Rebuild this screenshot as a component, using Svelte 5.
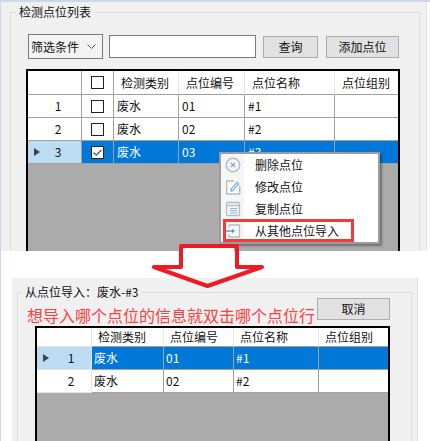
<script>
    const topCols = ['检测类别', '点位编号', '点位名称', '点位组别']
    const topRows = [
        { no: 1, code: '01', name: '#1', checked: false, active: false },
        { no: 2, code: '02', name: '#2', checked: false, active: false },
        { no: 3, code: '03', name: '#3', checked: true, active: true }
    ]
    const subRows = [
        { no: 1, code: '01', name: '#1', active: true },
        { no: 2, code: '02', name: '#2', active: false }
    ]
</script>

<div class="page">
    <section class="panel top">
        <div class="group">
            <span class="legend">检测点位列表</span>
            <div class="tools">
                <div class="select">
                    <span>筛选条件</span>
                    <svg width="9" height="5" viewBox="0 0 9 5"><path d="M.5.5 4.5 4.5 8.5.5" fill="none" stroke="#555" /></svg>
                </div>
                <div class="input"></div>
                <button class="btn query">查询</button>
                <button class="btn add">添加点位</button>
            </div>
            <div class="grid topgrid">
                <div class="row head">
                    <div class="cell rh"></div>
                    <div class="cell chk"><span class="box"></span></div>
                    {#each topCols as c}
                        <div class="cell">{c}</div>
                    {/each}
                </div>
                {#each topRows as r}
                    <div class="row" class:active={r.active}>
                        <div class="cell rh">
                            {#if r.active}<i class="tri"></i>{/if}
                            {r.no}
                        </div>
                        <div class="cell chk">
                            <span class="box">
                                {#if r.checked}
                                    <svg width="11" height="11" viewBox="0 0 11 11"><path d="M1.500 5.500 4.300 8 9.500 3" fill="none" stroke="#666" stroke-width="1.5" /></svg>
                                {/if}
                            </span>
                        </div>
                        <div class="cell">废水</div>
                        <div class="cell">{r.code}</div>
                        <div class="cell">{r.name}</div>
                        <div class="cell"></div>
                    </div>
                {/each}
                <div class="empty"></div>
            </div>
        </div>
    </section>

    <section class="panel sub">
        <div class="group">
            <span class="legend">从点位导入：废水-#3</span>
            <div class="hint">
                <span class="tip">想导入哪个点位的信息就双击哪个点位行</span>
                <button class="btn cancel">取消</button>
            </div>
            <div class="grid subgrid">
                <div class="row head">
                    <div class="cell rh"></div>
                    {#each topCols as c}
                        <div class="cell">{c}</div>
                    {/each}
                </div>
                {#each subRows as r}
                    <div class="row" class:active={r.active}>
                        <div class="cell rh">
                            {#if r.active}<i class="tri"></i>{/if}
                            {r.no}
                        </div>
                        <div class="cell">废水</div>
                        <div class="cell">{r.code}</div>
                        <div class="cell">{r.name}</div>
                        <div class="cell"></div>
                    </div>
                {/each}
                <div class="empty"></div>
            </div>
        </div>
    </section>

    <!-- overlays -->
    <div class="menu">
        <div class="item">
            <span class="ico">
                <svg width="18" height="18" viewBox="0 0 18 18">
                    <circle cx="9" cy="9" r="6.800" fill="#f4f6f9" stroke="#b4b9c2" stroke-width="1.4" />
                    <path d="M6.800 6.800 11.200 11.200M11.200 6.800 6.800 11.200" stroke="#7ea3cc" stroke-width="1.2" />
                </svg>
            </span>
            <span>删除点位</span>
        </div>
        <div class="item">
            <span class="ico">
                <svg width="18" height="18" viewBox="0 0 18 18">
                    <path d="M10 3H2.700V16H15.700V8" fill="#fff" stroke="#b8bbc0" stroke-width="1.4" />
                    <path d="M7 11 13 4 15 5.700 9 12.700 6.800 13.200Z" fill="#cfe4f6" stroke="#5fa5dc" />
                </svg>
            </span>
            <span>修改点位</span>
        </div>
        <div class="item">
            <span class="ico">
                <svg width="18" height="18" viewBox="0 0 18 18">
                    <rect x="2.500" y="2.500" width="13" height="13" rx="1" fill="#f3f5f8" stroke="#b8bbc0" stroke-width="1.3" />
                    <path d="M3 5.500H15" stroke="#b8bbc0" stroke-width="1.4" />
                    <path d="M6 8.500H13.500M6 10.700H13.500M6 12.900H13.500" stroke="#8db8e0" />
                </svg>
            </span>
            <span>复制点位</span>
        </div>
        <div class="item">
            <span class="ico">
                <svg width="18" height="18" viewBox="0 0 18 18">
                    <path d="M5 3H15.500V15H5V12.500M5 5.500V3" fill="#f6f7f9" stroke="#b8bbc0" stroke-width="1.3" />
                    <path d="M1 9H9" stroke="#4f9bd8" stroke-width="1.4" />
                    <path d="M8 6.800 11 9 8 11.200Z" fill="#4f9bd8" />
                </svg>
            </span>
            <span>从其他点位导入</span>
        </div>
        <div class="mark"></div>
    </div>

    <svg class="arrow" width="120" height="50" viewBox="0 0 120 50">
        <rect x="30" y="4" width="52" height="5" fill="#fff" />
        <path d="M29 2H85V23H110L55.500 42 2 23H29Z" fill="none" stroke="#ed1c24" stroke-width="4" stroke-linejoin="round" />
    </svg>
</div>

<style>
    :global(body) {
        background: #fff;
    }

    .page {
        position: relative;
        width: 429px;
        height: 439px;
        overflow: hidden;
        border-top: 2px solid #cbd8ea;
        border-left: 1px solid #cbd8ea;
        font-family: "Noto Sans CJK SC", "Liberation Sans", sans-serif;
        font-size: 12px;
        line-height: 18px;
        color: #111;
    }

    .panel {
        background: #f0f0f0;
        overflow: hidden;
        box-sizing: border-box;
    }

    .group {
        border: 1px solid #dcdcdc;
        height: 400px;
        box-sizing: border-box;
    }

    .legend {
        display: block;
        width: fit-content;
        background: #f0f0f0;
        padding: 0 3px;
        margin-top: -10px;
    }

    .top {
        width: 426px;
        height: 249px;
        padding: 10px 0 0 9px;
        border-right: 1px solid #e2e2e2;
    }

    .top .group {
        width: 410px;
    }

    .top .legend {
        margin-left: 5px;
    }

    .tools {
        display: flex;
        align-items: center;
        height: 25px;
        margin: 13px 0 10px 17px;
    }

    .select {
        width: 75px;
        height: 25px;
        box-sizing: border-box;
        border: 1px solid #7a7a7a;
        display: flex;
        align-items: center;
        justify-content: space-between;
        padding: 0 6px 0 2px;
        background: #f3f3f3;
    }

    .input {
        width: 147px;
        height: 23px;
        box-sizing: border-box;
        border: 1px solid #7a7a7a;
        background: #fff;
        margin: 0 7px 0 6px;
    }

    .btn {
        height: 22px;
        box-sizing: border-box;
        border: 1px solid #adadad;
        background: #e1e1e1;
        font: inherit;
        color: #111;
        padding: 0;
    }

    .query {
        width: 55px;
        margin-right: 8px;
    }

    .add {
        width: 73px;
    }

    .grid {
        border: 2px solid #000;
        border-bottom: 0;
        box-sizing: border-box;
        background: #ababab;
    }

    .row {
        display: grid;
        background: #fff;
    }

    .topgrid {
        width: 374px;
        margin-left: 15px;
    }

    .topgrid .row {
        grid-template-columns: 54px 32px 65px 66px 90px 63px;
        height: 23px;
    }

    .topgrid .head {
        height: 24px;
    }

    .subgrid {
        width: 355px;
        margin-left: 17px;
    }

    .subgrid .row {
        grid-template-columns: 55px 72px 70px 85px 69px;
        height: 23px;
    }

    .subgrid .head {
        height: 19px;
    }

    .cell {
        position: relative;
        display: flex;
        align-items: center;
        box-sizing: border-box;
        border-right: 1px solid #a0a0a0;
        border-bottom: 1px solid #a0a0a0;
        padding-left: 3px;
        white-space: nowrap;
    }

    .cell:last-child {
        border-right: 0;
    }

    .subgrid .cell {
        padding-left: 2px;
    }

    .head .cell {
        padding-left: 7px;
        border-right-color: #e6e6e6;
    }

    .subgrid .head .cell {
        padding-left: 6px;
    }

    .head .rh,
    .head .chk {
        border-right-color: #a0a0a0;
    }

    .subgrid .head .rh,
    .subgrid .rh {
        border-color: #e4e4e4;
    }

    .cell.rh {
        justify-content: center;
        padding-left: 7px;
    }

    .subgrid .cell.rh {
        padding-left: 14px;
    }

    .cell.chk {
        justify-content: center;
        padding-left: 0;
    }

    .box {
        width: 13px;
        height: 13px;
        box-sizing: border-box;
        border: 1px solid #222;
        background: #fff;
        display: flex;
        align-items: center;
        justify-content: center;
    }

    .active .cell {
        background: #0078d7;
        color: #fff;
    }

    .active .cell.rh {
        background: #bcdcf4;
        color: #111;
    }

    .tri {
        position: absolute;
        left: 6px;
        top: 7px;
        border-left: 6px solid #444;
        border-top: 4px solid transparent;
        border-bottom: 4px solid transparent;
    }

    .empty {
        height: 200px;
    }

    .sub {
        width: 406px;
        height: 163px;
        margin: 27px 0 0 11px;
        padding: 14px 0 0 5px;
        border-right: 1px solid #e2e2e2;
    }

    .sub .group {
        width: 395px;
    }

    .sub .legend {
        margin-left: 4px;
    }

    .hint {
        display: flex;
        justify-content: space-between;
        align-items: flex-start;
        width: 363px;
        height: 28px;
        margin: -3px 0 0 9px;
    }

    .tip {
        align-self: flex-end;
        font-size: 16px;
        line-height: 22px;
        color: #ff4040;
    }

    .cancel {
        width: 73px;
    }

    .menu {
        position: absolute;
        left: 218px;
        top: 150px;
        width: 161px;
        box-sizing: border-box;
        border: 2px solid #9c9c9c;
        background: #fff;
        box-shadow: 2px 2px 2px rgba(0, 0, 0, .35);
    }

    .item {
        display: flex;
        align-items: center;
        height: 22px;
    }

    .ico {
        display: flex;
        align-items: center;
        justify-content: center;
        width: 23px;
        height: 22px;
        background: #f6f6f6;
        margin-right: 11px;
    }

    .mark {
        position: absolute;
        left: 2px;
        top: 65px;
        width: 131px;
        height: 23px;
        box-sizing: border-box;
        border: 3px solid #f23a3a;
    }

    .arrow {
        position: absolute;
        left: 151px;
        top: 242px;
    }
</style>
